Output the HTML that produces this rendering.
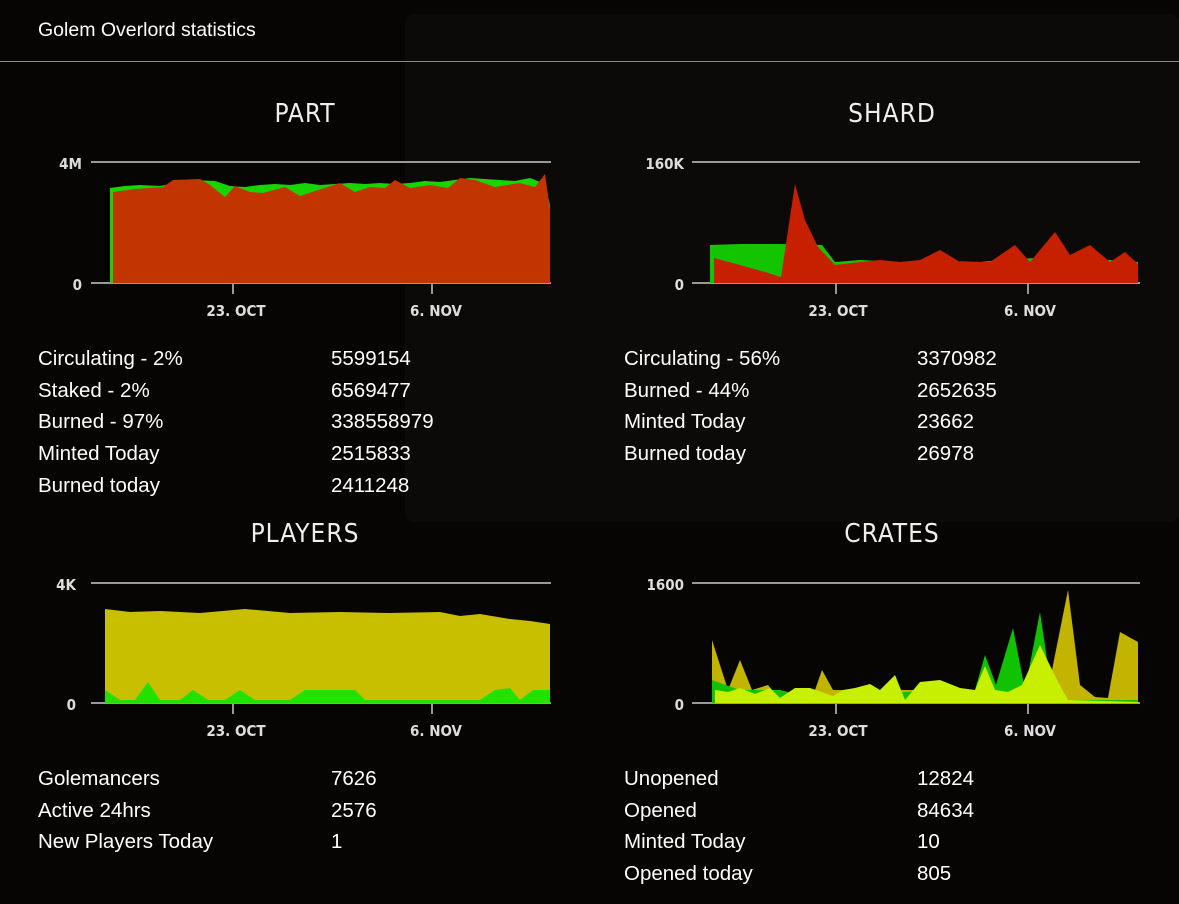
<!DOCTYPE html>
<html><head><meta charset="utf-8"><style>
body{margin:0;width:1179px;height:904px;background:#070504;overflow:hidden;font-family:"Liberation Sans",sans-serif;color:#fff;position:relative}
.bg1{position:absolute;left:405px;top:14px;width:774px;height:508px;background:#0c0a09;border-radius:10px}
.hdr{position:absolute;left:38px;top:19px;font-size:19.5px}
.line{position:absolute;left:0;top:61px;width:1179px;height:1px;background:#888}
.t{position:absolute;font-family:"DejaVu Sans Condensed","Liberation Sans Narrow",sans-serif;font-size:26px;letter-spacing:1px;transform:translateX(-50%);color:#eee}
.s{position:absolute;font-size:20.5px;line-height:20px}
svg{position:absolute;left:0;top:0}
</style></head><body>
<div class="bg1"></div>
<div class="hdr">Golem Overlord statistics</div>
<div class="line"></div>
<div class="t" style="left:305px;top:99px">PART</div>
<div class="t" style="left:892px;top:99px">SHARD</div>
<div class="t" style="left:305px;top:519px">PLAYERS</div>
<div class="t" style="left:892px;top:519px">CRATES</div>
<svg width="1179" height="904" font-family="DejaVu Sans Condensed,Liberation Sans Narrow,sans-serif" font-size="15" font-weight="bold" fill="#ddd">
<g stroke="#999" stroke-width="2">
<line x1="91" y1="162" x2="551" y2="162"/><line x1="91" y1="283" x2="551" y2="283"/>
<line x1="692" y1="162" x2="1140" y2="162"/><line x1="692" y1="283" x2="1140" y2="283"/>
<line x1="91" y1="583" x2="551" y2="583"/><line x1="91" y1="703" x2="551" y2="703"/>
<line x1="692" y1="583" x2="1140" y2="583"/><line x1="692" y1="703" x2="1140" y2="703"/>
<line x1="233" y1="283" x2="233" y2="294"/><line x1="432" y1="283" x2="432" y2="294"/>
<line x1="836" y1="283" x2="836" y2="294"/><line x1="1028" y1="283" x2="1028" y2="294"/>
<line x1="233" y1="703" x2="233" y2="714"/><line x1="432" y1="703" x2="432" y2="714"/>
<line x1="836" y1="703" x2="836" y2="714"/><line x1="1028" y1="703" x2="1028" y2="714"/>
</g>
<g text-anchor="end"><text x="82" y="169">4M</text><text x="82" y="290">0</text>
<text x="684" y="169">160K</text><text x="684" y="290">0</text>
<text x="76" y="590">4K</text><text x="76" y="710">0</text>
<text x="684" y="590">1600</text><text x="684" y="710">0</text></g>
<g text-anchor="middle"><text x="236" y="316">23. OCT</text><text x="436" y="316">6. NOV</text>
<text x="838" y="316">23. OCT</text><text x="1030" y="316">6. NOV</text>
<text x="236" y="736">23. OCT</text><text x="436" y="736">6. NOV</text>
<text x="838" y="736">23. OCT</text><text x="1030" y="736">6. NOV</text></g>
<polygon fill="#19d400" points="110,283 110,188 125,186 140,185 160,186 175,183 195,180 215,181 230,186 245,187 260,185 275,184 290,185 305,183 320,185 335,184 350,183 365,184 380,183 395,184 410,183 425,181 440,182 455,180 470,178 485,179 500,180 515,181 530,178 545,184 550,205 550,283"/>
<polygon fill="#c23500" points="113,283 113,192 135,189 163,187 173,180 200,179 210,185 225,197 235,186 250,192 263,193 285,187 300,196 318,190 340,183 355,192 370,187 385,188 395,180 410,188 430,185 448,188 460,178 475,180 495,187 520,183 535,187 545,174 550,210 550,283"/>
<polygon fill="#13c400" points="710,283 710,245 740,244 780,244 822,245 835,262 860,260 900,262 940,261 980,262 1010,259 1040,258 1080,259 1110,260 1138,262 1138,283"/>
<polygon fill="#c62000" points="714,283 714,258 740,265 765,272 781,277 795,184 805,220 818,247 835,265 860,262 880,260 900,262 920,260 940,250 960,262 990,262 1015,245 1030,262 1055,232 1070,255 1090,245 1110,262 1125,252 1138,264 1138,283"/>
<polygon fill="#c7bf00" points="105,703 105,609 130,612 160,611 200,613 245,609 290,613 340,612 390,613 440,612 460,616 480,614 510,619 530,621 550,624 550,703"/>
<polygon fill="#22e000" points="105,703 105,690 120,700 135,700 148,682 160,700 180,700 193,690 208,700 225,700 240,690 255,700 290,700 305,690 355,690 365,700 480,700 495,690 510,688 520,700 533,690 550,690 550,703"/>
<polygon fill="#c2b400" points="712,703 712,640 728,690 740,660 752,690 768,685 780,700 795,690 815,690 822,670 833,690 900,690 950,690 990,690 1010,690 1048,690 1068,590 1080,685 1095,697 1108,698 1120,632 1138,642 1138,703"/>
<polygon fill="#11c200" points="712,703 712,680 740,690 780,690 820,700 870,695 930,690 975,690 985,655 996,685 1013,628 1025,690 1040,612 1050,680 1060,700 1138,700 1138,703"/>
<polygon fill="#c6f000" points="715,703 715,690 728,692 740,688 755,694 770,688 780,698 795,688 810,688 833,696 843,690 855,688 870,684 880,690 895,675 905,700 920,682 940,680 960,688 975,690 985,666 995,690 1008,692 1022,685 1040,645 1057,680 1068,700 1138,702 1138,703"/>
</svg>
<div class="s" style="left:38px;top:349px">Circulating - 2%</div><div class="s" style="left:331px;top:349px">5599154</div>
<div class="s" style="left:38px;top:381px">Staked - 2%</div><div class="s" style="left:331px;top:381px">6569477</div>
<div class="s" style="left:38px;top:412px">Burned - 97%</div><div class="s" style="left:331px;top:412px">338558979</div>
<div class="s" style="left:38px;top:444px">Minted Today</div><div class="s" style="left:331px;top:444px">2515833</div>
<div class="s" style="left:38px;top:476px">Burned today</div><div class="s" style="left:331px;top:476px">2411248</div>
<div class="s" style="left:624px;top:349px">Circulating - 56%</div><div class="s" style="left:917px;top:349px">3370982</div>
<div class="s" style="left:624px;top:381px">Burned - 44%</div><div class="s" style="left:917px;top:381px">2652635</div>
<div class="s" style="left:624px;top:412px">Minted Today</div><div class="s" style="left:917px;top:412px">23662</div>
<div class="s" style="left:624px;top:444px">Burned today</div><div class="s" style="left:917px;top:444px">26978</div>
<div class="s" style="left:38px;top:769px">Golemancers</div><div class="s" style="left:331px;top:769px">7626</div>
<div class="s" style="left:38px;top:801px">Active 24hrs</div><div class="s" style="left:331px;top:801px">2576</div>
<div class="s" style="left:38px;top:832px">New Players Today</div><div class="s" style="left:331px;top:832px">1</div>
<div class="s" style="left:624px;top:769px">Unopened</div><div class="s" style="left:917px;top:769px">12824</div>
<div class="s" style="left:624px;top:801px">Opened</div><div class="s" style="left:917px;top:801px">84634</div>
<div class="s" style="left:624px;top:832px">Minted Today</div><div class="s" style="left:917px;top:832px">10</div>
<div class="s" style="left:624px;top:864px">Opened today</div><div class="s" style="left:917px;top:864px">805</div>
</body></html>
